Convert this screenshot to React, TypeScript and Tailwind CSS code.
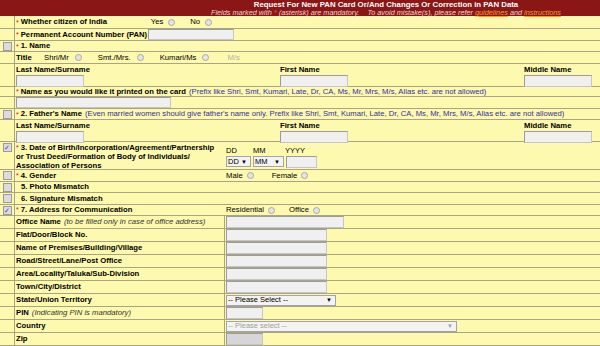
import React from 'react';

const line = 'border-b border-[#aaa482]';

const Star = () => <span className="text-[#d01010] font-normal mr-[2px] text-[7px] leading-none">*</span>;

const Radio = ({ mx = 'mx-[4px]' }: { mx?: string }) => (
    <span className={`inline-block w-[7px] h-[7px] rounded-full bg-[#e4e4e4] border border-[#a8a8a8] align-middle ${mx}`} />
);

const Check = ({ checked = false }: { checked?: boolean }) => (
    <span className="w-[9px] h-[9px] bg-[#dcdcdc] border border-[#9a9a9a] flex items-center justify-center text-[7px] leading-none text-[#4040b0]">
        {checked ? '✓' : ''}
    </span>
);

const Input = ({ w, h = 12, disabled = false }: { w: number; h?: number; disabled?: boolean }) => (
    <div
        className={`${disabled ? 'bg-[#d6d6d6]' : 'bg-[#f0f0f0]'} border border-[#c6c6c6] border-t-[#9c9c9c] border-l-[#9c9c9c]`}
        style={{ width: w, height: h }}
    />
);

const Select = ({ w, text, muted = false }: { w: number; text: string; muted?: boolean }) => (
    <div
        className={`h-[11px] bg-[#f3f3f3] border border-[#a4a4a4] flex items-center justify-between pl-[1px] pr-[3px] text-[7.5px] ${muted ? 'text-[#a0a0a0]' : 'text-black'}`}
        style={{ width: w }}
    >
        <span>{text}</span>
        <span className="text-[6px]">▼</span>
    </div>
);

// one table row: narrow checkbox column + content
const Row = ({ h, box, children }: { h: number; box?: React.ReactNode; children: React.ReactNode }) => (
    <div className={`flex ${line}`} style={{ height: h }}>
        <div className="w-[15px] shrink-0 border-r border-[#aaa482] flex items-start justify-center pt-[1px]">{box}</div>
        <div className="flex-1 min-w-0">{children}</div>
    </div>
);

const AddrRow = ({ label, note, children }: { label: string; note?: string; children?: React.ReactNode }) => (
    <Row h={13}>
        <div className="flex h-full">
            <div className="w-[210px] shrink-0 border-r border-[#aaa482] pl-[1px] flex items-center">
                <b>{label}</b>
                {note && <i className="font-normal text-[#333] ml-[3px]">{note}</i>}
            </div>
            <div className="pl-[1px] flex items-center">{children}</div>
        </div>
    </Row>
);

const NameFields = () => (
    <div className="flex h-full">
        <div className="w-[265px] pl-[1px]">
            <b className="block leading-[10px] mt-[1px]">Last Name/Surname</b>
            <Input w={68} h={12} />
        </div>
        <div className="w-[244px]">
            <b className="block leading-[10px] mt-[1px]">First Name</b>
            <Input w={68} h={12} />
        </div>
        <div>
            <b className="block leading-[10px] mt-[1px]">Middle Name</b>
            <Input w={68} h={12} />
        </div>
    </div>
);

export default function App() {
    return (
        <div className="w-[600px] h-[346px] overflow-hidden bg-[#fdf9ae] text-black text-[7.7px] leading-none" style={{ fontFamily: '"Liberation Sans", Arial, sans-serif' }}>
            <div className="h-[16px] bg-[#8a1616] pl-[172px] text-center whitespace-nowrap">
                <div className="text-white font-bold text-[7.8px] leading-[8px] pt-[1px]">
                    Request For New PAN Card Or/And Changes Or Correction in PAN Data
                </div>
                <div className="italic text-[#f4d3d3] text-[7.3px] leading-[7px]">
                    Fields marked with <span className="text-[#ff5050]">*</span> (asterisk) are mandatory.&nbsp;&nbsp;&nbsp; To avoid mistake(s), please refer{' '}
                    <span className="text-[#ff9a2a] underline">guidelines</span> and <span className="text-[#ff9a2a] underline">instructions</span>
                </div>
            </div>

            <Row h={13}>
                <div className="flex items-center h-full pl-[1px]">
                    <Star /><b className="w-[130px]">Whether citizen of India</b>
                    <span>Yes</span><Radio mx="mx-[5px]" /><span className="ml-[10px]">No</span><Radio mx="mx-[5px]" />
                </div>
            </Row>
            <Row h={12}>
                <div className="flex items-center h-full pl-[1px]">
                    <Star /><b className="w-[127px]">Permanent Account Number (PAN)</b>
                    <Input w={86} h={11} />
                </div>
            </Row>
            <Row h={11} box={<Check />}>
                <div className="flex items-center h-full pl-[1px]"><Star /><b>1. Name</b></div>
            </Row>
            <Row h={12}>
                <div className="flex items-center h-full pl-[1px]">
                    <b className="w-[28px]">Title</b>
                    <span>Shri/Mr</span><Radio mx="mx-[6px]" />
                    <span className="ml-[10px]">Smt./Mrs.</span><Radio mx="mx-[6px]" />
                    <span className="ml-[10px]">Kumari/Ms</span><Radio mx="mx-[6px]" />
                    <span className="ml-[12px] text-[#b0b0b0]">M/s</span>
                </div>
            </Row>
            <Row h={23}><NameFields /></Row>
            <Row h={10}>
                <div className="flex items-center h-full pl-[1px] whitespace-nowrap">
                    <Star /><b>Name as you would like it printed on the card</b>
                    <span className="text-[#3030a0] ml-[3px]">(Prefix like Shri, Smt, Kumari, Late, Dr, CA, Ms, Mr, Mrs, M/s, Alias etc. are not allowed)</span>
                </div>
            </Row>
            <Row h={12}>
                <div className="flex items-center h-full pl-[1px]"><Input w={155} h={11} /></div>
            </Row>
            <Row h={11} box={<Check />}>
                <div className="flex items-center h-full pl-[1px] whitespace-nowrap">
                    <Star /><b>2. Father's Name</b>
                    <span className="text-[#3030a0] ml-[3px]">(Even married women should give father's name only. Prefix like Shri, Smt, Kumari, Late, Dr, CA, Ms, Mr, Mrs, M/s, Alias etc. are not allowed)</span>
                </div>
            </Row>
            <Row h={22}><NameFields /></Row>
            <Row h={28} box={<Check checked />}>
                <div className="flex h-full">
                    <div className="w-[210px] pl-[1px] pt-[1px] leading-[9px] whitespace-nowrap">
                        <div className="flex items-center"><Star /><b>3. Date of Birth/Incorporation/Agreement/Partnership</b></div>
                        <b className="block">or Trust Deed/Formation of Body of Individuals/</b>
                        <b className="block">Association of Persons</b>
                    </div>
                    <div className="pl-[1px] pt-[5px]">
                        <div className="flex text-[7.5px] leading-[8px]">
                            <span className="w-[27px]">DD</span><span className="w-[32px]">MM</span><span>YYYY</span>
                        </div>
                        <div className="flex gap-[2px] mt-[1px]">
                            <Select w={25} text="DD" />
                            <Select w={31} text="MM" />
                            <Input w={31} h={12} />
                        </div>
                    </div>
                </div>
            </Row>
            <Row h={12} box={<Check />}>
                <div className="flex h-full items-center">
                    <div className="w-[210px] pl-[1px]"><Star /><b>4. Gender</b></div>
                    <span className="pl-[1px]">Male</span><Radio />
                    <span className="ml-[14px]">Female</span><Radio />
                </div>
            </Row>
            <Row h={11} box={<Check />}>
                <div className="flex h-full items-center pl-[6px]"><b>5. Photo Mismatch</b></div>
            </Row>
            <Row h={12} box={<Check />}>
                <div className="flex h-full items-center pl-[6px]"><b>6. Signature Mismatch</b></div>
            </Row>
            <Row h={11} box={<Check checked />}>
                <div className="flex h-full items-center">
                    <div className="w-[210px] pl-[1px]"><Star /><b>7. Address for Communication</b></div>
                    <span className="pl-[1px]">Residential</span><Radio />
                    <span className="ml-[10px]">Office</span><Radio />
                </div>
            </Row>
            <AddrRow label="Office Name" note="(to be filled only in case of office address)"><Input w={118} /></AddrRow>
            <AddrRow label="Flat/Door/Block No."><Input w={101} /></AddrRow>
            <AddrRow label="Name of Premises/Building/Village"><Input w={101} /></AddrRow>
            <AddrRow label="Road/Street/Lane/Post Office"><Input w={101} /></AddrRow>
            <AddrRow label="Area/Locality/Taluka/Sub-Division"><Input w={101} /></AddrRow>
            <AddrRow label="Town/City/District"><Input w={101} /></AddrRow>
            <AddrRow label="State/Union Territory"><Select w={110} text="-- Please Select --" /></AddrRow>
            <AddrRow label="PIN" note="(Indicating PIN is mandatory)"><Input w={37} /></AddrRow>
            <AddrRow label="Country"><Select w={231} text="-- Please select --" muted /></AddrRow>
            <AddrRow label="Zip"><Input w={37} disabled /></AddrRow>
        </div>
    );
}
